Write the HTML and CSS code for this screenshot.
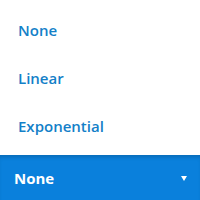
FILE: index.html
```html
<!doctype html>
<html lang="en">
<head>
    <meta charset="UTF-8">
    <title>Select</title>
    <link rel="stylesheet" href="styles.css">
</head>
<body>
<div id="app">
    <ul class="options">
        <li>None</li>
        <li>Linear</li>
        <li>Exponential</li>
    </ul>
    <div class="select">
        <span class="value">None</span>
        <span class="arrow"></span>
    </div>
</div>
</body>
</html>
```

FILE: styles.css
```css
* {
    margin: 0;
    padding: 0;
}

ul {
    list-style: none;
}

html, body, #app {
    width: 100%;
    height: 100%;
    overflow: hidden;
}

#app {
    display: flex;
    flex-direction: column;
    background: white;
    font-family: 'Open Sans', 'Liberation Sans', sans-serif;
}

.options {
    flex: 1;
    padding-top: 6px;
}

.options li {
    height: 48px;
    line-height: 48px;
    padding-left: 18px;
    font-size: 15px;
    font-weight: 600;
    color: #1380c8;
}

.select {
    height: 45px;
    display: flex;
    align-items: center;
    justify-content: space-between;
    padding: 0 13px 0 14px;
    background: #0a80dc;
    box-shadow: inset 0 4px 4px -2px rgba(0, 0, 0, 0.18);
    color: white;
    font-size: 15px;
    font-weight: 700;
}

.select .arrow {
    width: 0;
    height: 0;
    border-left: 3.5px solid transparent;
    border-right: 3.5px solid transparent;
    border-top: 5px solid white;
    margin-top: 2px;
}
```
